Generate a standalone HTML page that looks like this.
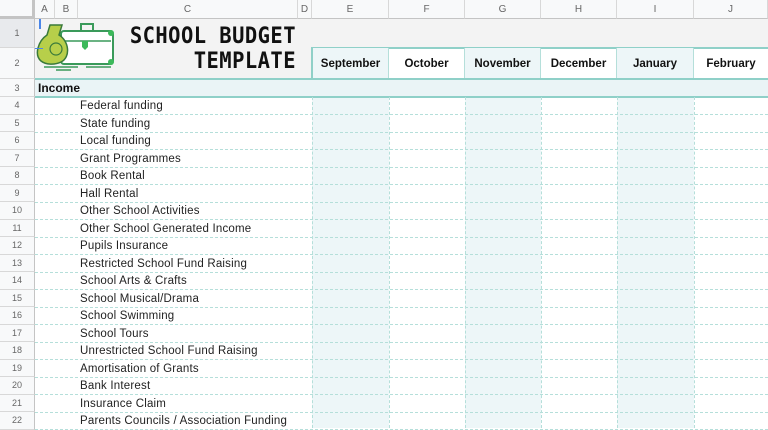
<!DOCTYPE html>
<html><head><meta charset="utf-8"><style>
*{margin:0;padding:0;box-sizing:border-box}
body{width:768px;height:428px;overflow:hidden;background:#fff;font-family:"Liberation Sans",sans-serif;position:relative}
.a{position:absolute}
.ch{top:0;height:19px;background:#f8f9fa;border-right:1px solid #d8d8d8;border-bottom:1px solid #c4c4c4;font-size:10px;color:#666;text-align:center;line-height:19px}
.rh{left:0;width:35px;background:#f8f9fa;border-right:1px solid #c4c4c4;border-bottom:1px solid #d8d8d8;font-size:9px;color:#666;text-align:center}
.sh{background:#edf6f8}
.ln{left:35px;width:733px;height:0;border-top:1px dashed #b5dfda}
.vl{top:97px;height:331px;width:0;border-left:1px dashed #b5dfda}
.lab{left:80px;font-size:11.5px;color:#222;letter-spacing:.2px;white-space:nowrap}
.m{top:48px;height:31px;font-size:11.5px;font-weight:bold;text-align:center;line-height:33px;color:#111;border-right:1px solid #b5dfda}
</style></head><body>
<div class="a ch" style="left:0;width:35px;border-right:3px solid #c4c4c4;border-bottom:3px solid #c4c4c4;height:19px"></div>
<div class="a ch" style="left:35px;width:20px">A</div>
<div class="a ch" style="left:55px;width:23px">B</div>
<div class="a ch" style="left:78px;width:220px">C</div>
<div class="a ch" style="left:298px;width:14px">D</div>
<div class="a ch" style="left:312px;width:77px">E</div>
<div class="a ch" style="left:389px;width:76px">F</div>
<div class="a ch" style="left:465px;width:76px">G</div>
<div class="a ch" style="left:541px;width:76px">H</div>
<div class="a ch" style="left:617px;width:77px">I</div>
<div class="a ch" style="left:694px;width:74px">J</div>
<div class="a" style="left:35px;top:19px;width:733px;height:60px;background:#f3f3f3"></div>
<div class="a rh" style="top:19px;height:29px;line-height:29px;background:#e8eaed">1</div>
<div class="a rh" style="top:48px;height:31px;line-height:31px">2</div>
<div class="a rh" style="top:79px;height:18px;line-height:18px">3</div>
<div class="a sh" style="left:312px;top:97px;width:77px;height:331px"></div>
<div class="a sh" style="left:465px;top:97px;width:76px;height:331px"></div>
<div class="a sh" style="left:617px;top:97px;width:77px;height:331px"></div>
<div class="a" style="left:311px;top:47px;width:457px;height:33px;border:2px solid #8fd0c8;border-right:none;background:#fff"></div>
<div class="a m sh" style="left:313px;width:76px">September</div>
<div class="a m" style="left:389px;width:76px">October</div>
<div class="a m sh" style="left:465px;width:76px">November</div>
<div class="a m" style="left:541px;width:76px">December</div>
<div class="a m sh" style="left:617px;width:77px">January</div>
<div class="a m" style="left:694px;width:74px;border:none">February</div>
<div class="a" style="left:35px;top:78px;width:733px;height:20px;background:#eaf4f6;border-top:2px solid #8fd0c8;border-bottom:2px solid #8fd0c8"></div>
<div class="a" style="left:38px;top:81px;font-size:12px;font-weight:bold;color:#111">Income</div>
<div class="a" style="left:96px;top:24px;width:200px;text-align:right;font-size:22px;font-weight:bold;line-height:25px;letter-spacing:0.5px;color:#111;font-family:'DejaVu Sans Mono','Liberation Mono',monospace;white-space:nowrap;transform:scaleX(0.93);transform-origin:right">SCHOOL BUDGET<br>TEMPLATE</div>
<svg class="a" style="left:36px;top:19px" width="80" height="60" viewBox="0 0 80 60">
<rect x="25" y="12" width="52" height="33" rx="3" fill="#fff" stroke="#3a9a5a" stroke-width="2"/>
<path d="M45 12 V5 h12 V12" fill="none" stroke="#3a9a5a" stroke-width="2"/>
<path d="M27 22 H75" stroke="#3a9a5a" stroke-width="1.5"/>
<path d="M46 22 v6 l3 3 3-3 v-6z" fill="#3cb95a"/>
<circle cx="75" cy="14" r="3" fill="#3cb95a"/><circle cx="75" cy="43" r="3" fill="#3cb95a"/>
<path d="M14 6 h12 l-3 10 c10 6 12 22 2 27 c-6 3 -15 3 -20 -1 c-7 -6 -3 -20 6 -26z" fill="#b7cf4a" stroke="#3a7a3a" stroke-width="1.5"/>
<circle cx="20" cy="30" r="6" fill="none" stroke="#3a7a3a" stroke-width="1.2"/>
<path d="M8 48 H42 M50 48 H75 M20 51 H35" stroke="#3a9a5a" stroke-width="1.5"/>
</svg>
<div class="a" style="left:39px;top:19px;width:2px;height:10px;background:#4a86e8"></div>
<div class="a" style="left:35px;top:48px;width:8px;height:1px;background:#4a86e8"></div>
<div class="a vl" style="left:312px"></div>
<div class="a vl" style="left:389px"></div>
<div class="a vl" style="left:465px"></div>
<div class="a vl" style="left:541px"></div>
<div class="a vl" style="left:617px"></div>
<div class="a vl" style="left:694px"></div>
<div id="lines"></div>
<script>
var labels=["Federal funding","State funding","Local funding","Grant Programmes","Book Rental","Hall Rental","Other School Activities","Other School Generated Income","Pupils Insurance","Restricted School Fund Raising","School Arts & Crafts","School Musical/Drama","School Swimming","School Tours","Unrestricted School Fund Raising","Amortisation of Grants","Bank Interest","Insurance Claim","Parents Councils / Association Funding"];
var h="";
for(var i=0;i<19;i++){var t=97+i*17.5;
h+='<div class="a rh" style="top:'+t+'px;height:17.5px;line-height:17.5px">'+(i+4)+'</div>';
h+='<div class="a ln" style="top:'+(t+17)+'px"></div>';
h+='<div class="a lab" style="top:'+(t+3)+'px">'+labels[i].replace("&","&amp;")+'</div>';}
document.getElementById("lines").innerHTML=h;
</script>
</body></html>
